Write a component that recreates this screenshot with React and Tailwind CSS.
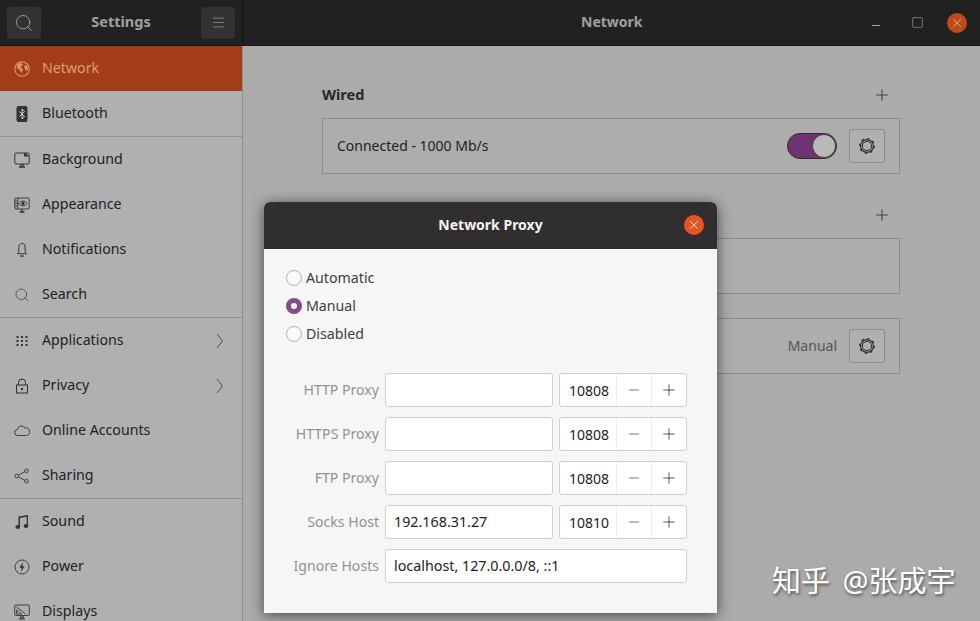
import { Minus, Plus, Search, Menu, X, Square } from 'lucide-react';

const font = { fontFamily: '"Noto Sans", "Noto Sans CJK SC", sans-serif' };

// Sidebar icons, drawn on a 16px box
const Globe = () => (
  <svg width="16" height="16" viewBox="0 0 16 16" className="text-[#e0906f]">
    <circle cx="8" cy="8" r="7.2" fill="none" stroke="currentColor" strokeWidth="1.2" />
    <path d="M3 4l3-2 3 1-1 2-2 1 2 1 1 2-2 3-1-3-3-2zM10 5l3-1 1 4-2 2-1-2z" fill="currentColor" />
  </svg>
);
const BluetoothIcon = () => (
  <svg width="16" height="16" viewBox="0 0 16 16">
    <rect x="2.5" y="0" width="11" height="16" rx="2" fill="#333" />
    <path d="M5.5 5.5l5 5-2.5 2.5V3l2.5 2.5-5 5" fill="none" stroke="#ddd" strokeWidth="0.9" />
  </svg>
);
const BackgroundIcon = () => (
  <svg width="16" height="16" viewBox="0 0 16 16" fill="none" stroke="#333" strokeWidth="1">
    <path d="M2 1h12a1.2 1.2 0 0 1 1.2 1.2v8.6A1.2 1.2 0 0 1 14 12H2a1.2 1.2 0 0 1-1.2-1.2V2.2A1.2 1.2 0 0 1 2 1z" />
    <path d="M10 1v3.5h5.2L11.5 1z" fill="#333" stroke="none" />
    <path d="M5 15h6M7 12v3M9 12v3" strokeWidth="1.3" />
  </svg>
);
const AppearanceIcon = () => (
  <svg width="16" height="16" viewBox="0 0 16 16" fill="none" stroke="#333" strokeWidth="0.9">
    <rect x="0.8" y="1" width="14.4" height="11" rx="1" />
    <path d="M0.8 4h3M0.8 6.5h3M0.8 9h3M3.8 1v11" />
    <path d="M5 6.5c2-3.2 6-3.2 8 0-2 3.2-6 3.2-8 0z" />
    <circle cx="9" cy="6.5" r="1.2" fill="#333" />
    <path d="M5.5 15h5M8 12v3" strokeWidth="1.3" />
  </svg>
);
const Bell = () => (
  <svg width="16" height="16" viewBox="0 0 16 16" fill="none" stroke="#333" strokeWidth="1">
    <path d="M8 1.5c-2.3 0-3.2 1.7-3.2 4v4L3.6 11.7h8.8l-1.2-2.2v-4c0-2.3-.9-4-3.2-4z" />
    <path d="M6.3 14h3.4" strokeWidth="1.4" />
  </svg>
);
const SearchIcon = () => <Search size={18} strokeWidth={1} color="#333" />;
const Grid = () => (
  <svg width="16" height="16" viewBox="0 0 16 16" fill="#333">
    {[3, 7, 11].flatMap((y) =>
      [2.5, 7, 11.5].map((x) => <rect key={`${x}-${y}`} x={x} y={y} width="2" height="2" />)
    )}
  </svg>
);
const Lock = () => (
  <svg width="16" height="16" viewBox="0 0 16 16" fill="none" stroke="#333" strokeWidth="1">
    <rect x="2.5" y="7" width="11" height="8" />
    <path d="M4.5 7V4.5a3.5 3.5 0 0 1 7 0V7" />
    <rect x="7" y="10" width="2" height="2" fill="#333" stroke="none" />
  </svg>
);
const Cloud = () => (
  <svg width="16" height="16" viewBox="0 0 16 16" fill="none" stroke="#333" strokeWidth="0.9">
    <path d="M4 12.5a3 3 0 0 1-.5-6A4 4 0 0 1 11 5a3.8 3.8 0 0 1 1.5 7.5z" />
  </svg>
);
const Share = () => (
  <svg width="16" height="16" viewBox="0 0 16 16" fill="none" stroke="#333" strokeWidth="0.9">
    <circle cx="2.8" cy="8" r="1.8" />
    <circle cx="12.5" cy="2.8" r="1.8" />
    <circle cx="12.5" cy="13.2" r="1.8" />
    <path d="M4.4 7.1l6.5-3.5M4.4 8.9l6.5 3.5" />
  </svg>
);
const Music = () => (
  <svg width="16" height="16" viewBox="0 0 16 16" fill="#333">
    <path d="M4.5 2.5L14 1v1.6L6 3.9V13H4.5zM12.7 2h1.3v10h-1.3z" />
    <ellipse cx="3.8" cy="13" rx="2.4" ry="1.9" />
    <ellipse cx="12" cy="12" rx="2.4" ry="1.9" />
  </svg>
);
const Power = () => (
  <svg width="16" height="16" viewBox="0 0 16 16">
    <circle cx="8" cy="8" r="7" fill="none" stroke="#333" strokeWidth="0.9" />
    <path d="M8.8 3L5.5 8.8h2.2L7.2 13l3.3-5.8H8.3z" fill="#333" />
  </svg>
);
const Displays = () => (
  <svg width="16" height="16" viewBox="0 0 16 16" fill="none" stroke="#333" strokeWidth="0.9">
    <rect x="0.7" y="1" width="14.6" height="10.5" rx="1" />
    <path d="M2.5 3l9 7M2.5 6l5 4h-5z" />
    <path d="M5 15h6M7 12v3M9 12v3" strokeWidth="1.2" />
  </svg>
);

const Gear = () => (
  <svg width="18" height="18" viewBox="0 0 18 18" fill="none" stroke="#2e2e2e">
    <circle cx="9" cy="9" r="4.6" strokeWidth="1" />
    <circle cx="9" cy="9" r="6.4" strokeWidth="1.2" />
    <circle cx="9" cy="9" r="7.3" strokeWidth="1.4" strokeDasharray="2.2 3.53" />
  </svg>
);

const sidebarGroups = [
  [
    { label: 'Network', icon: Globe, active: true },
    { label: 'Bluetooth', icon: BluetoothIcon },
  ],
  [
    { label: 'Background', icon: BackgroundIcon },
    { label: 'Appearance', icon: AppearanceIcon },
    { label: 'Notifications', icon: Bell },
    { label: 'Search', icon: SearchIcon },
  ],
  [
    { label: 'Applications', icon: Grid, arrow: true },
    { label: 'Privacy', icon: Lock, arrow: true },
    { label: 'Online Accounts', icon: Cloud },
    { label: 'Sharing', icon: Share },
  ],
  [
    { label: 'Sound', icon: Music },
    { label: 'Power', icon: Power },
    { label: 'Displays', icon: Displays },
  ],
];

const proxies = [
  { label: 'HTTP Proxy', host: '', port: '10808' },
  { label: 'HTTPS Proxy', host: '', port: '10808' },
  { label: 'FTP Proxy', host: '', port: '10808' },
  { label: 'Socks Host', host: '192.168.31.27', port: '10810' },
];

function SidebarRow({ item }) {
  const Icon = item.icon;
  return (
    <div
      className={`h-[45px] flex items-center pl-[14px] pr-[18px] text-[14.2px] ${
        item.active ? 'bg-[#a33d17] text-[#e09a7c]' : 'text-[#222]'
      }`}
    >
      <span className="w-[16px] flex justify-center">
        <Icon />
      </span>
      <span className="ml-[12px] mb-[2px] flex-1">{item.label}</span>
      {item.arrow && (
        <svg width="8" height="16" viewBox="0 0 8 16" fill="none" stroke="#444" strokeWidth="0.9">
          <path d="M1 1l5.5 7L1 15" />
        </svg>
      )}
    </div>
  );
}

function Radio({ label, checked }) {
  return (
    <div className="h-[28px] flex items-center gap-[4px] text-[14.2px] text-[#3d3d3d]">
      {checked ? (
        <span className="w-[16px] h-[16px] rounded-full bg-[#8a4a8c] flex items-center justify-center">
          <span className="w-[6px] h-[6px] rounded-full bg-white" />
        </span>
      ) : (
        <span className="w-[16px] h-[16px] rounded-full border border-[#b5b5b5] bg-[#fafafa]" />
      )}
      <span className="mb-[1px]">{label}</span>
    </div>
  );
}

function TextBox({ value, className }) {
  return (
    <div
      className={`h-[34px] bg-white border border-[#cfcfcf] rounded-[3px] flex items-center px-[8px] text-[14.3px] text-[#222] ${className}`}
    >
      {value}
    </div>
  );
}

function PortSpinner({ port }) {
  return (
    <div className="w-[128px] h-[34px] bg-white border border-[#cfcfcf] rounded-[3px] flex items-center text-[14px] text-[#222]">
      <span className="w-[56px] pl-[9px]">{port}</span>
      <span className="w-[35px] h-full border-l border-[#ececec] flex items-center justify-center">
        <Minus size={16} strokeWidth={1} color="#333" />
      </span>
      <span className="flex-1 h-full border-l border-[#ececec] flex items-center justify-center">
        <Plus size={18} strokeWidth={1} color="#222" />
      </span>
    </div>
  );
}

function GearButton() {
  return (
    <div className="w-[36px] h-[34px] rounded-[3px] border border-[#8c8c8c] bg-[#b0b0b0] flex items-center justify-center">
      <Gear />
    </div>
  );
}

function SectionAdd() {
  return <Plus size={18} strokeWidth={1} color="#1c1c1c" />;
}

function HostLabel({ children }) {
  return <span className="w-[93px] mb-[1px] text-right text-[14.1px] text-[#929292]">{children}</span>;
}

export default function App() {
  return (
    <div className="relative w-[980px] h-[621px] overflow-hidden bg-[#ababab]" style={font}>
      {/* Title bar */}
      <div className="h-[46px] flex bg-[#222121] border-b border-[#141414]">
        <div className="w-[242px] h-full flex items-center justify-between px-[7px]">
          <div className="w-[34px] h-[32px] rounded-[3px] bg-[#333232] flex items-center justify-center">
            <Search size={20} strokeWidth={1} color="#aaa" />
          </div>
          <span className="text-[14.5px] font-bold text-[#a0a0a0] mb-[2px]">Settings</span>
          <div className="w-[34px] h-[32px] rounded-[3px] bg-[#333232] flex items-center justify-center">
            <Menu size={15} strokeWidth={1} color="#aaa" />
          </div>
        </div>
        <div className="w-px h-full bg-[#141414]" />
        <div className="flex-1 h-full flex items-center pl-[338px] pr-[13px]">
          <span className="text-[14px] font-bold text-[#a0a0a0] mb-[2px]">Network</span>
          <span className="ml-auto flex items-center">
            <span className="w-[8px] h-px bg-[#aaa] mt-[5px] mr-[31px]" />
            <Square size={13} strokeWidth={1.1} color="#aaa" className="mr-[23px]" />
            <span className="w-[20px] h-[20px] rounded-full bg-[#c14a16] flex items-center justify-center">
              <X size={14} strokeWidth={1.3} color="#e8c4b0" />
            </span>
          </span>
        </div>
      </div>

      <div className="flex h-[575px]">
        {/* Sidebar */}
        <div className="w-[243px] shrink-0 bg-[#b0b0b0] border-r border-[#8e8e8e] overflow-hidden">
          {sidebarGroups.map((group, i) => (
            <div key={i} className={i < sidebarGroups.length - 1 ? 'border-b border-[#939393]' : ''}>
              {group.map((item) => (
                <SidebarRow key={item.label} item={item} />
              ))}
            </div>
          ))}
        </div>

        {/* Main panel */}
        <div className="flex-1 pl-[79px] pr-[80px] pt-[37px]">
          <div className="h-[24px] flex items-center justify-between pr-[9px] text-[14.5px] font-bold text-[#262626]">
            Wired
            <SectionAdd />
          </div>
          <div className="mt-[11px] h-[56px] border border-[#8c8c8c] bg-[#adadad] flex items-center pl-[14px] pr-[14px] text-[14px] text-[#222]">
            <span className="flex-1 mb-[2px]">Connected - 1000 Mb/s</span>
            <div className="w-[50px] h-[26px] rounded-full bg-[#6d3270] border border-[#2c2c2c] flex justify-end mr-[12px]">
              <span className="w-[24px] h-[24px] rounded-full bg-[#b9b9b9] border border-[#444]" />
            </div>
            <GearButton />
          </div>
          <div className="mt-[29px] h-[24px] flex items-center justify-end pr-[9px]">
            <SectionAdd />
          </div>
          <div className="mt-[11px] h-[56px] border border-[#8c8c8c] bg-[#adadad]" />
          <div className="mt-[24px] h-[56px] border border-[#8c8c8c] bg-[#adadad] flex items-center justify-end pr-[14px] text-[14px] text-[#555]">
            <span className="mr-[12px] mb-[2px]">Manual</span>
            <GearButton />
          </div>
        </div>
      </div>

      {/* Network Proxy dialog */}
      <div className="absolute left-[264px] top-[202px] w-[453px] h-[411px] rounded-t-[6px] bg-[#f6f6f6] shadow-[0_2px_14px_rgba(0,0,0,0.6)] overflow-hidden">
        <div className="relative h-[47px] bg-[#302e2e] flex items-center justify-center text-[14px] font-bold text-[#f4f4f4]">
          <span className="mb-[2px]">Network Proxy</span>
          <span className="absolute right-[13px] top-[13px] w-[20px] h-[20px] rounded-full bg-[#e95420] flex items-center justify-center">
            <X size={14} strokeWidth={1.5} color="#fff" />
          </span>
        </div>
        <div className="pt-[15px] pl-[22px] pr-[30px]">
          <Radio label="Automatic" />
          <Radio label="Manual" checked />
          <Radio label="Disabled" />
          <div className="mt-[25px] flex flex-col gap-[10px]">
            {proxies.map((p) => (
              <div key={p.label} className="flex items-center">
                <HostLabel>{p.label}</HostLabel>
                <TextBox value={p.host} className="ml-[6px] w-[168px]" />
                <span className="ml-[6px]">
                  <PortSpinner port={p.port} />
                </span>
              </div>
            ))}
            <div className="flex items-center">
              <HostLabel>Ignore Hosts</HostLabel>
              <TextBox value="localhost, 127.0.0.0/8, ::1" className="ml-[6px] w-[302px]" />
            </div>
          </div>
        </div>
      </div>

      {/* Watermark */}
      <span className="absolute left-[772px] top-[559px] text-[29px] text-white [word-spacing:5px] [text-shadow:1px_2px_3px_rgba(0,0,0,0.5)]">
        知乎 @张成宇
      </span>
    </div>
  );
}
